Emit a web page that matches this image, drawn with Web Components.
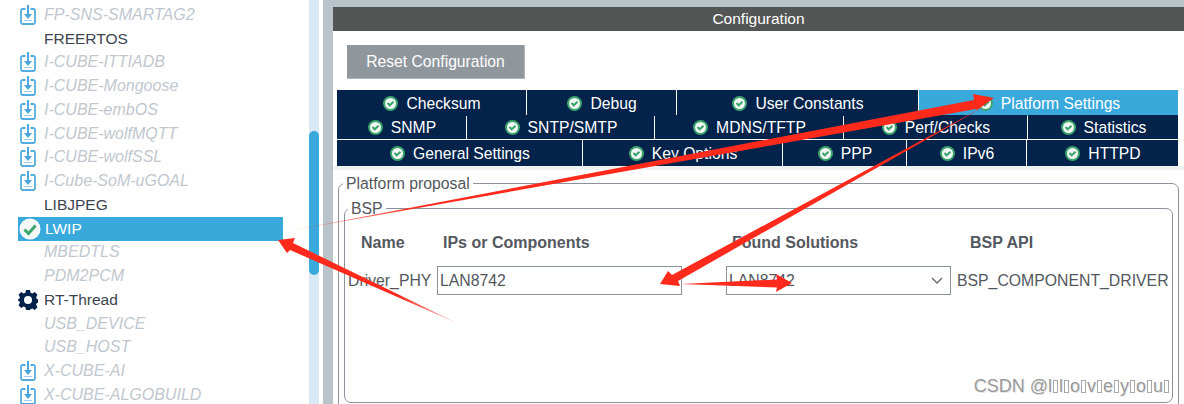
<!DOCTYPE html>
<html>
<head>
<meta charset="utf-8">
<title>Configuration</title>
<style>
  html, body { margin: 0; height: 100%; overflow: hidden; background: #fff; }
  body { font-family: "Liberation Sans", Arial, sans-serif; }
</style>
</head>
<body>
<cube-app></cube-app>

<script>
const ICON_DOWNLOAD = `<svg width="18" height="20" viewBox="0 0 18 20"><path d="M5.500 4H2.500A1.500 1.500 0 0 0 1 5.500V17.500A1.500 1.500 0 0 0 2.500 19h11A1.500 1.500 0 0 0 15 17.500V5.500A1.500 1.500 0 0 0 13.500 4H10.500" fill="none" stroke="#55addd" stroke-width="1.800"/><path d="M7 0h2v9h3l-4 5-4-5h3z" fill="#4aa6dc"/><path d="M4 15.500h8" stroke="#9bd0ec" stroke-width="1"/></svg>`;

class SideItem extends HTMLElement {
  connectedCallback() {
    const icon = this.getAttribute("icon") || "";
    const root = this.attachShadow({ mode: "open" });
    let glyph = "";
    if (icon === "pack") glyph = ICON_DOWNLOAD;
    if (icon === "gear") glyph = `<svg width="20" height="20" viewBox="0 0 20 20"><path fill-rule="evenodd" fill="#03234b" d="M8 0h4l.6 2.700 1.700.7L16.700 2l2.800 2.800-1.400 2.400.7 1.700 1.200.3v3.600l-1.200.300-.7 1.700 1.400 2.400-2.800 2.800-2.400-1.400-1.700.7L12 20H8l-.6-2.700-1.700-.7L3.300 18 .5 15.200l1.400-2.400-.7-1.700L0 10.800V9.200l1.200-.3.700-1.700L.5 4.800 3.300 2l2.400 1.400 1.700-.7zM10 6a4 4 0 1 0 0 8 4 4 0 0 0 0-8z"/></svg>`;
    if (icon === "ok") glyph = `<svg width="22" height="22" viewBox="0 0 22 22"><circle cx="11" cy="11" r="10.500" fill="#fff"/><circle cx="11" cy="11" r="9" fill="#f4f7f5"/><path d="M5.500 11.500l4 4 7-8" fill="none" stroke="#3aa76d" stroke-width="3"/></svg>`;
    root.innerHTML = `
      <style>
        :host {
          display: flex;
          align-items: center;
          height: 23.750px;
          font-size: 16px;
          color: #bfc7cf;
          font-style: italic;
          white-space: nowrap;
        }
        :host([state="plain"]) { color: #3c4450; font-style: normal; font-size: 15.500px; }
        :host([state="active"]) {
          color: #fff; font-style: normal; font-size: 15.500px;
          background: #39a9dc;
          width: 265px;
        }
        .ico { width: 26px; flex: none; display: flex; align-items: center; box-sizing: border-box; }
        :host([icon="pack"]) .ico { padding-left: 2px; }
        :host([icon="ok"]) .ico { padding-left: 1px; }
        :host([state="active"]) .txt { padding-left: 1px; }
      </style>
      <span class="ico">${glyph}</span><span class="txt"><slot></slot></span>`;
  }
}
customElements.define("side-item", SideItem);

class SideList extends HTMLElement {
  constructor() {
    super();
    this.attachShadow({ mode: "open" }).innerHTML = `
      <style>
        :host {
          display: flex;
          flex: none;
          width: 333px;
          height: 404px;
          background: #fff;
          box-sizing: border-box;
        }
        .list { width: 309px; box-sizing: border-box; padding: 3px 0 0 18px; flex: none; overflow: hidden; height: 404px; }
        .track { width: 10px; flex: none; background: #d9e8f5; padding-top: 131px; box-sizing: border-box; }
        .thumb { height: 144px; background: #39a9dc; border-radius: 5px; }
        .gap { width: 4px; flex: none; }
        .rail { width: 10px; flex: none; background: #b8c3ca; }
      </style>
      <div class="list"><slot></slot></div>
      <div class="track"><div class="thumb"></div></div>
      <div class="gap"></div>
      <div class="rail"></div>`;
  }
}
customElements.define("side-list", SideList);

class TabCell extends HTMLElement {
  constructor() {
    super();
    this.attachShadow({ mode: "open" }).innerHTML = `
      <style>
        :host {
          display: flex;
          align-items: center;
          justify-content: center;
          gap: 8px;
          padding-left: 1px;
          background: #03234b;
          color: #fff;
          font-size: 15.700px;
          box-sizing: border-box;
          min-width: 0;
        }
        :host([active]) { background: #39a9dc; height: 26px; }
        svg { flex: none; }
        span { margin-top: 2px; }
      </style>
      <svg width="15" height="15" viewBox="0 0 15 15"><circle cx="7.500" cy="7.500" r="7.500" fill="#3ba36c"/><circle cx="7.500" cy="7.500" r="5.500" fill="#f2f6f4"/><path d="M4.500 7l2.200 2.300 3.800-3.600" fill="none" stroke="#3ba36c" stroke-width="2"/></svg>
      <span><slot></slot></span>`;
  }
}
customElements.define("tab-cell", TabCell);

class TabRow extends HTMLElement {
  constructor() {
    super();
    this.attachShadow({ mode: "open" }).innerHTML = `
      <style>
        :host { display: grid; column-gap: 1px; height: 24px; }
      </style>
      <slot></slot>`;
  }
  connectedCallback() {
    this.style.gridTemplateColumns = this.getAttribute("cols");
    if (this.hasAttribute("tall")) this.style.height = "26px";
  }
}
customElements.define("tab-row", TabRow);

class GroupBox extends HTMLElement {
  constructor() {
    super();
    this.attachShadow({ mode: "open" }).innerHTML = `
      <style>
        :host { display: block; }
        fieldset {
          margin: 0;
          padding: var(--pad, 0);
          border: 1px solid #8a939c;
          border-radius: 7px;
          height: var(--h, auto);
          box-sizing: border-box;
        }
        legend { padding: 0 3px; font-size: 15.800px; color: #52575d; margin-left: var(--lg, 3px); line-height: var(--lh, 17px); }
      </style>
      <fieldset><legend></legend><slot></slot></fieldset>`;
  }
  connectedCallback() {
    this.shadowRoot.querySelector("legend").textContent = this.getAttribute("label");
  }
}
customElements.define("group-box", GroupBox);

class BspTable extends HTMLElement {
  constructor() {
    super();
    this.attachShadow({ mode: "open" }).innerHTML = `
      <style>
        :host {
          display: grid;
          grid-template-columns: 92px 245px 44px 225px 6px auto;
          font-size: 15.800px;
          color: #52575d;
          padding: 13px 0 0 0;
        }
        .h { font-weight: bold; font-size: 16px; height: 36px; line-height: 26px; color: #54585e; white-space: nowrap; }
        .c { height: 29px; line-height: 29px; box-sizing: border-box; white-space: nowrap; }
        .box { border: 1px solid #8a939c; padding-left: 2px; line-height: 27px; display: flex; justify-content: space-between; }
        .box svg { align-self: center; margin-right: 7px; }
      </style>
      <div class="h" style="padding-left:16px">Name</div>
      <div class="h" style="padding-left:6px">IPs or Components</div>
      <div class="h"></div>
      <div class="h" style="padding-left:6px">Found Solutions</div>
      <div class="h"></div>
      <div class="h" style="padding-left:13px">BSP API</div>
      <div class="c" style="padding-left:3px">Driver_PHY</div>
      <div class="c box">LAN8742</div>
      <div class="c"></div>
      <div class="c box">LAN8742<svg width="12" height="7" viewBox="0 0 12 7"><path d="M1 1l5 5 5-5" fill="none" stroke="#6d747b" stroke-width="1.500"/></svg></div>
      <div class="c"></div>
      <div class="c">BSP_COMPONENT_DRIVER</div>`;
  }
}
customElements.define("bsp-table", BspTable);

class ConfigPanel extends HTMLElement {
  constructor() {
    super();
    this.attachShadow({ mode: "open" }).innerHTML = `
      <style>
        :host { display: block; flex: 1; min-width: 0; background: #fff; height: 404px; overflow: hidden; }
        .cap { height: 7px; background: #b8c3ca; }
        .head { height: 24px; background: #545655; color: #fff; font-size: 15.500px; line-height: 24px; text-align: center; }
        .tools { height: 59px; box-sizing: border-box; padding: 14px 0 0 14px; }
        button {
          display: block;
          width: 178px; height: 34px;
          border: 0; border-right: 1px solid #b0b5ba; border-bottom: 1px solid #b0b5ba;
          background: #8f969c; color: #fff;
          font: 15.700px "Liberation Sans", Arial, sans-serif;
          padding: 0;
        }
        .tabs { margin-left: 4px; width: 841px; display: grid; row-gap: 1px; }
        .body { background: #fff; border-top: 4px solid #eff2f3; padding: 4px 5px 0 5px; }
      </style>
      <div class="cap"></div>
      <div class="head">Configuration</div>
      <div class="tools"><button>Reset Configuration</button></div>
      <div class="tabs"><slot name="tabs"></slot></div>
      <div class="body"><slot></slot></div>`;
  }
}
customElements.define("config-panel", ConfigPanel);

class CubeApp extends HTMLElement {
  constructor() {
    super();
    this.attachShadow({ mode: "open" }).innerHTML = `
      <style>
        :host { display: flex; width: 1184px; height: 404px; position: relative; font-family: "Liberation Sans", Arial, sans-serif; overflow: hidden; }
        .arrows { position: absolute; left: 0; top: 0; pointer-events: none; }
        .mark {
          position: absolute; right: 14px; top: 376px;
          font-size: 18px; line-height: 20px; color: #9a9a9a;
          text-shadow: 1px 1px 0 #e8e8e8;
          white-space: nowrap;
        }
        .mark i { display: inline-block; width: 3px; height: 11px; border: 1px solid #a8a8a8; margin: 0 1px; vertical-align: -1px; }
      </style>
      <side-list>
        <side-item icon="pack">FP-SNS-SMARTAG2</side-item>
        <side-item state="plain">FREERTOS</side-item>
        <side-item icon="pack">I-CUBE-ITTIADB</side-item>
        <side-item icon="pack">I-CUBE-Mongoose</side-item>
        <side-item icon="pack">I-CUBE-embOS</side-item>
        <side-item icon="pack">I-CUBE-wolfMQTT</side-item>
        <side-item icon="pack">I-CUBE-wolfSSL</side-item>
        <side-item icon="pack">I-Cube-SoM-uGOAL</side-item>
        <side-item state="plain">LIBJPEG</side-item>
        <side-item icon="ok" state="active">LWIP</side-item>
        <side-item>MBEDTLS</side-item>
        <side-item>PDM2PCM</side-item>
        <side-item icon="gear" state="plain">RT-Thread</side-item>
        <side-item>USB_DEVICE</side-item>
        <side-item>USB_HOST</side-item>
        <side-item icon="pack">X-CUBE-AI</side-item>
        <side-item icon="pack">X-CUBE-ALGOBUILD</side-item>
      </side-list>
      <config-panel>
        <tab-row slot="tabs" cols="189px 149px 241px 259px">
          <tab-cell>Checksum</tab-cell><tab-cell>Debug</tab-cell><tab-cell>User Constants</tab-cell><tab-cell active>Platform Settings</tab-cell>
        </tab-row>
        <tab-row slot="tabs" cols="129px 187px 188px 183px 150px">
          <tab-cell>SNMP</tab-cell><tab-cell>SNTP/SMTP</tab-cell><tab-cell>MDNS/TFTP</tab-cell><tab-cell>Perf/Checks</tab-cell><tab-cell>Statistics</tab-cell>
        </tab-row>
        <tab-row slot="tabs" tall cols="245px 199px 123px 119px 151px">
          <tab-cell>General Settings</tab-cell><tab-cell>Key Options</tab-cell><tab-cell>PPP</tab-cell><tab-cell>IPv6</tab-cell><tab-cell>HTTPD</tab-cell>
        </tab-row>
        <group-box label="Platform proposal" style="--h:260px;--pad:0 5px 0 5px;--lg:-1px;--lh:19px">
          <group-box label="BSP" style="--h:203px;--lg:3px;--pad:0;--lh:17px;margin-top:7px">
            <bsp-table></bsp-table>
          </group-box>
        </group-box>
      </config-panel>
      <svg class="arrows" width="1184" height="404" viewBox="0 0 1184 404">
        <defs>
          <linearGradient id="fade1" gradientUnits="userSpaceOnUse" x1="283" y1="232" x2="420" y2="206">
            <stop offset="0" stop-color="#ff2a1c" stop-opacity=".15"/><stop offset="1" stop-color="#ff2a1c"/>
          </linearGradient>
          <linearGradient id="fade4" gradientUnits="userSpaceOnUse" x1="459" y1="324" x2="400" y2="296">
            <stop offset="0" stop-color="#ff2a1c" stop-opacity=".2"/><stop offset="1" stop-color="#ff2a1c"/>
          </linearGradient>
        </defs>
        <polygon fill="url(#fade1)" points="283,232 974,100 973,94 994,98 977,110 976,109"/>
        <polygon fill="#ff2a1c" points="987,105 678,281 680,286 660,284 668,271 672,275"/>
        <polygon fill="#ff2a1c" points="681,284 777,279.500 776,274 792,283 776,292 777,287.500"/>
        <polygon fill="url(#fade4)" points="459,324 290,250 287,253 278,240 295,238 293,243"/>
      </svg>
      <span class="mark">CSDN @l<i></i>l<i></i>o<i></i>v<i></i>e<i></i>y<i></i>o<i></i>u<i></i></span>`;
  }
}
customElements.define("cube-app", CubeApp);
</script>
</body>
</html>
